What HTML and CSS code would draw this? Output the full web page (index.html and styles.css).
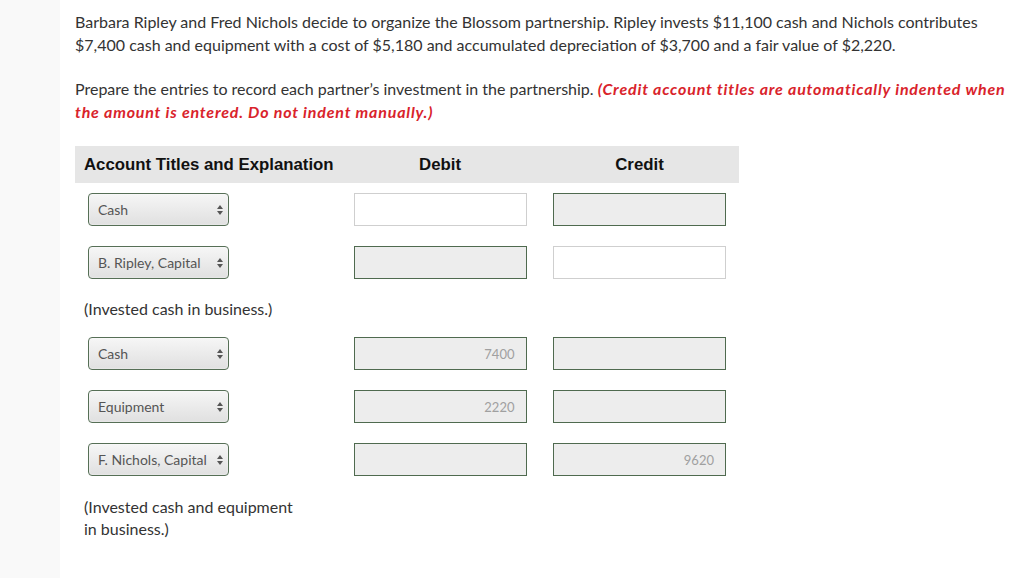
FILE: index.html
```html
<!DOCTYPE html>
<html lang="en">
<head>
<meta charset="utf-8">
<title>Blossom partnership</title>
<link rel="stylesheet" href="styles.css">
</head>
<body>
<div class="page">
  <aside class="gutter"></aside>
  <main class="content">
    <p class="para">Barbara Ripley and Fred Nichols decide to organize the Blossom partnership. Ripley invests $11,100 cash and Nichols contributes $7,400 cash and equipment with a cost of $5,180 and accumulated depreciation of $3,700 and a fair value of $2,220.</p>
    <p class="para second">Prepare the entries to record each partner’s investment in the partnership. <span class="note">(Credit account titles are automatically indented when the amount is entered. Do not indent manually.)</span></p>

    <div class="journal">
      <div class="head">
        <div class="h-acc">Account Titles and Explanation</div>
        <div class="h-num">Debit</div>
        <div class="h-num">Credit</div>
      </div>

      <div class="row">
        <div class="cell-acc"><div class="sel"><span>Cash</span><svg class="arr" viewBox="0 0 8 12" width="8" height="12"><path d="M4 1 L7 5 H1 Z M4 11 L7 7 H1 Z" fill="#555"/></svg></div></div>
        <div class="cell-num"><div class="inp empty"></div></div>
        <div class="cell-num"><div class="inp"></div></div>
      </div>
      <div class="row">
        <div class="cell-acc"><div class="sel"><span>B. Ripley, Capital</span><svg class="arr" viewBox="0 0 8 12" width="8" height="12"><path d="M4 1 L7 5 H1 Z M4 11 L7 7 H1 Z" fill="#555"/></svg></div></div>
        <div class="cell-num"><div class="inp"></div></div>
        <div class="cell-num"><div class="inp empty"></div></div>
      </div>
      <div class="explain first">(Invested cash in business.)</div>

      <div class="row">
        <div class="cell-acc"><div class="sel"><span>Cash</span><svg class="arr" viewBox="0 0 8 12" width="8" height="12"><path d="M4 1 L7 5 H1 Z M4 11 L7 7 H1 Z" fill="#555"/></svg></div></div>
        <div class="cell-num"><div class="inp">7400</div></div>
        <div class="cell-num"><div class="inp"></div></div>
      </div>
      <div class="row">
        <div class="cell-acc"><div class="sel"><span>Equipment</span><svg class="arr" viewBox="0 0 8 12" width="8" height="12"><path d="M4 1 L7 5 H1 Z M4 11 L7 7 H1 Z" fill="#555"/></svg></div></div>
        <div class="cell-num"><div class="inp">2220</div></div>
        <div class="cell-num"><div class="inp"></div></div>
      </div>
      <div class="row">
        <div class="cell-acc"><div class="sel"><span>F. Nichols, Capital</span><svg class="arr" viewBox="0 0 8 12" width="8" height="12"><path d="M4 1 L7 5 H1 Z M4 11 L7 7 H1 Z" fill="#555"/></svg></div></div>
        <div class="cell-num"><div class="inp"></div></div>
        <div class="cell-num"><div class="inp">9620</div></div>
      </div>
      <div class="explain last">(Invested cash and equipment<br>in business.)</div>
    </div>
  </main>
</div>
</body>
</html>
```

FILE: styles.css
```css
html, body {
  margin: 0;
  padding: 0;
  background: #ffffff;
}
body {
  font-family: Lato, "Open Sans", sans-serif;
  color: #333333;
}
.page {
  display: flex;
  min-height: 578px;
}
.gutter {
  width: 60px;
  flex: 0 0 60px;
  background: #f9f9f9;
}
.content {
  flex: 1;
  padding: 10px 0 0 15px;
}
.para {
  margin: 0;
  font-size: 16px;
  line-height: 23px;
  width: 940px;
  color: #333333;
}
.para.second {
  margin-top: 21px;
}
.note {
  color: #d9232b;
  font-weight: bold;
  font-style: italic;
  letter-spacing: 0.8px;
}
.journal {
  width: 664px;
  margin-top: 23px;
}
.head {
  display: grid;
  grid-template-columns: 265px 200px 199px;
  height: 37px;
  align-items: center;
  background: #e6e6e6;
  font-family: "Liberation Sans", Arial, sans-serif;
  font-weight: bold;
  font-size: 16.8px;
  color: #111111;
}
.h-acc {
  padding-left: 9px;
}
.h-num {
  text-align: center;
}
.row {
  display: grid;
  grid-template-columns: 265px 200px 199px;
  padding: 10px 0;
  align-items: center;
}
.cell-acc {
  padding-left: 13px;
}
.cell-num {
  display: flex;
  justify-content: center;
}
.sel {
  box-sizing: border-box;
  width: 141px;
  height: 33px;
  border: 1px solid #566f56;
  border-radius: 4px;
  background: linear-gradient(#f6f6f6, #e0e0e0);
  box-shadow: inset 0 0 2px rgba(255,255,255,0.8);
  display: flex;
  align-items: center;
  justify-content: space-between;
  padding: 0 4px 0 9px;
  font-size: 14px;
  color: #555555;
}
.arr {
  display: block;
}
.inp {
  box-sizing: border-box;
  width: 173px;
  height: 33px;
  border: 1px solid #4f6a4f;
  background: #ededed;
  font-size: 13px;
  color: #a0a0a0;
  text-align: right;
  line-height: 31px;
  padding: 1px 11px 0 0;
}
.inp.empty {
  background: #ffffff;
  border-color: #cfcfcf;
}
.explain {
  font-size: 16px;
  line-height: 22px;
  padding-left: 9px;
  color: #333333;
}
.explain.first {
  padding-top: 9px;
  padding-bottom: 7px;
}
.explain.last {
  padding-top: 10px;
}
```
